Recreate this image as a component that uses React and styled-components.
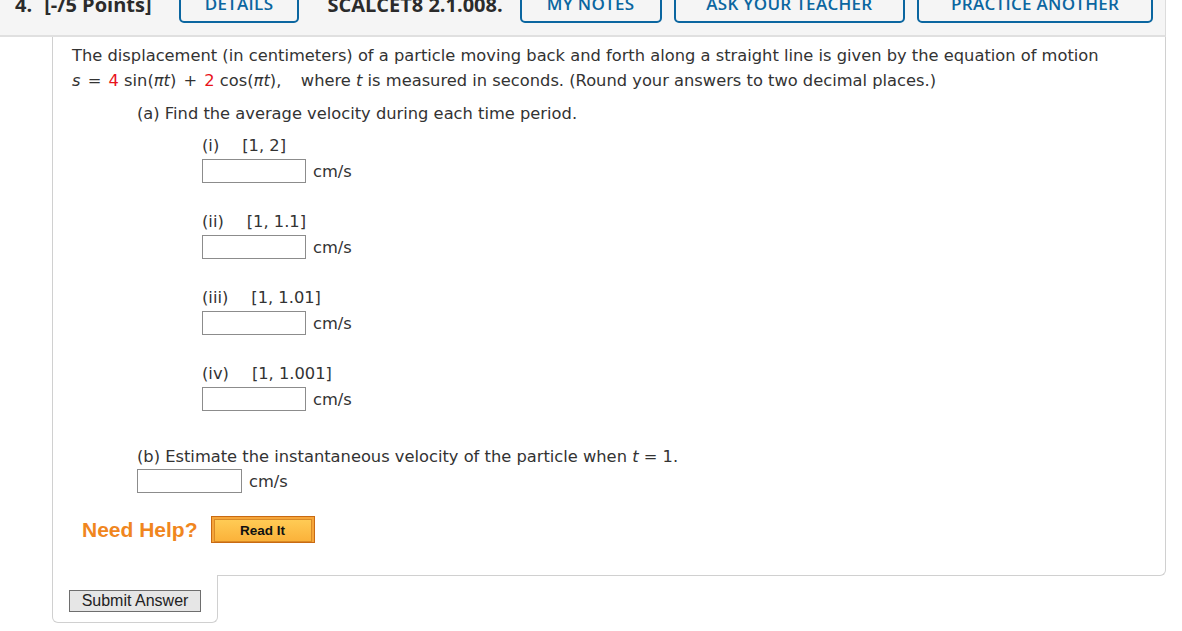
import React from 'react';
import styled, { createGlobalStyle } from 'styled-components';

const GlobalStyle = createGlobalStyle`
  body {
    margin: 0;
    background: #fff;
    font-family: "DejaVu Sans", Verdana, sans-serif;
    overflow: hidden;
  }
`;

const Page = styled.div`
  width: 1166px;
`;

const Header = styled.div`
  display: flex;
  align-items: flex-start;
  height: 56px;
  margin-top: -21px;
  padding: 0 12px 0 15px;
  background: #f5f5f5;
  border-right: 1px solid #dcdcdc;
  border-bottom: 2px solid #e0e0e0;
  font-family: "Open Sans", sans-serif;
  font-weight: 700;
  color: #2b2b2b;
`;

const Title = styled.span`
  font-size: 20px;
  line-height: 44px;
  margin-top: 4px;
  margin-left: ${p => p.$ml || 0}px;
  margin-right: ${p => p.$gap || 0}px;
  white-space: pre;
`;

const TabButton = styled.div`
  box-sizing: border-box;
  display: flex;
  align-items: center;
  justify-content: center;
  width: ${p => p.$w}px;
  height: 44px;
  padding-top: 4px;
  margin-left: ${p => p.$ml || 0}px;
  border: 2px solid #0b66a0;
  border-radius: 5px;
  color: #0b66a0;
  font-size: 17px;
  font-weight: 600;
  letter-spacing: 0.3px;
`;

const Body = styled.div`
  margin-left: 52px;
  padding: 6px 19px 0 19px;
  border-left: 1px solid #d0d0d0;
  border-right: 1px solid #d0d0d0;
  border-bottom: 1px solid #d0d0d0;
  border-bottom-right-radius: 6px;
  height: 539px;
  box-sizing: border-box;
  color: #333;
  font-size: 16.3px;
`;

const Para = styled.p`
  margin: 0;
  line-height: 25px;
`;

const Red = styled.span`
  color: #e8141b;
`;

const Var = styled.i`
  font-style: italic;
`;

const Op = styled.span`
  margin: 0 ${p => p.$m || 2}px;
`;

const Part = styled.div`
  margin: ${p => p.$mt}px 0 0 65px;
  line-height: 25px;
`;

const Sub = styled.div`
  margin: ${p => p.$mt}px 0 0 130px;
`;

const Label = styled.div`
  display: flex;
  line-height: 22px;
  span:first-child {
    margin-right: ${p => p.$gap}px;
  }
`;

const AnswerRow = styled.div`
  display: flex;
  align-items: center;
  gap: 7px;
  height: 24px;
  margin-top: ${p => p.$mt || 0}px;
  margin-left: ${p => p.$ml || 0}px;
`;

const Box = styled.div`
  box-sizing: border-box;
  width: ${p => p.$w || 104}px;
  height: 24px;
  border: 1px solid #8c8c8c;
  background: #fff;
`;

const Help = styled.div`
  display: flex;
  align-items: center;
  gap: 13px;
  margin: 23px 0 0 10px;
`;

const HelpText = styled.span`
  font-family: "Liberation Sans", Arial, sans-serif;
  font-weight: 700;
  font-size: 21px;
  color: #f0861e;
`;

const ReadIt = styled.div`
  box-sizing: border-box;
  width: 104px;
  height: 27px;
  border: 1px solid #c96a12;
  padding: 2px;
  background: #f5a53a;
  div {
    height: 100%;
    border: 1px solid #d98a26;
    background: linear-gradient(#ffcb55, #fbb23a);
    display: flex;
    align-items: center;
    justify-content: center;
    font-family: "Liberation Sans", Arial, sans-serif;
    font-weight: 700;
    font-size: 13.5px;
    color: #111;
  }
`;

const Tab = styled.div`
  box-sizing: border-box;
  position: relative;
  width: 166px;
  height: 48px;
  margin: -1px 0 0 52px;
  padding: 15px 0 0 16px;
  background: #fff;
  border-left: 1px solid #d0d0d0;
  border-right: 1px solid #d0d0d0;
  border-bottom: 1px solid #d0d0d0;
  border-radius: 0 0 6px 6px;
`;

const Submit = styled.div`
  box-sizing: border-box;
  display: inline-flex;
  align-items: center;
  justify-content: center;
  width: 132px;
  height: 22px;
  background: #e6e6e6;
  border: 1px solid #6e6e6e;
  font-family: "Liberation Sans", Arial, sans-serif;
  font-size: 16px;
  color: #222;
`;

const items = [
  { tag: '(i)', range: '[1, 2]', gap: 23, mt: 9 },
  { tag: '(ii)', range: '[1, 1.1]', gap: 23, mt: 28 },
  { tag: '(iii)', range: '[1, 1.01]', gap: 23, mt: 28 },
  { tag: '(iv)', range: '[1, 1.001]', gap: 23, mt: 28 },
];

export default function App() {
  return (
    <Page>
      <GlobalStyle />
      <Header>
        <Title $gap={12}>4.</Title>
        <Title>[-/5 Points]</Title>
        <TabButton $w={121} $ml={27}>DETAILS</TabButton>
        <Title $ml={28}>SCALCET8 2.1.008.</Title>
        <TabButton $w={142} $ml={17}>MY NOTES</TabButton>
        <TabButton $w={232} $ml={12}>ASK YOUR TEACHER</TabButton>
        <TabButton $w={236} $ml={12}>PRACTICE ANOTHER</TabButton>
      </Header>
      <Body>
        <Para>
          The displacement (in centimeters) of a particle moving back and forth along a straight line is given by the equation of motion
          <br />
          <Var>s</Var> <Op>=</Op> <Red>4</Red> sin(<Var>πt</Var>) <Op>+</Op> <Red>2</Red> cos(<Var>πt</Var>),&nbsp;<Op>&nbsp;</Op> where <Var>t</Var> is measured in seconds. (Round your answers to two decimal places.)
        </Para>
        <Part $mt={8}>(a) Find the average velocity during each time period.</Part>
        {items.map(it => (
          <Sub key={it.tag} $mt={it.mt}>
            <Label $gap={it.gap}>
              <span>{it.tag}</span>
              <span>{it.range}</span>
            </Label>
            <AnswerRow $mt={2}>
              <Box />
              <span>cm/s</span>
            </AnswerRow>
          </Sub>
        ))}
        <Part $mt={33}>
          (b) Estimate the instantaneous velocity of the particle when <Var>t</Var> = 1.
        </Part>
        <AnswerRow $ml={65}>
          <Box $w={105} />
          <span>cm/s</span>
        </AnswerRow>
        <Help>
          <HelpText>Need Help?</HelpText>
          <ReadIt>
            <div>Read It</div>
          </ReadIt>
        </Help>
      </Body>
      <Tab>
        <Submit>Submit Answer</Submit>
      </Tab>
    </Page>
  );
}
